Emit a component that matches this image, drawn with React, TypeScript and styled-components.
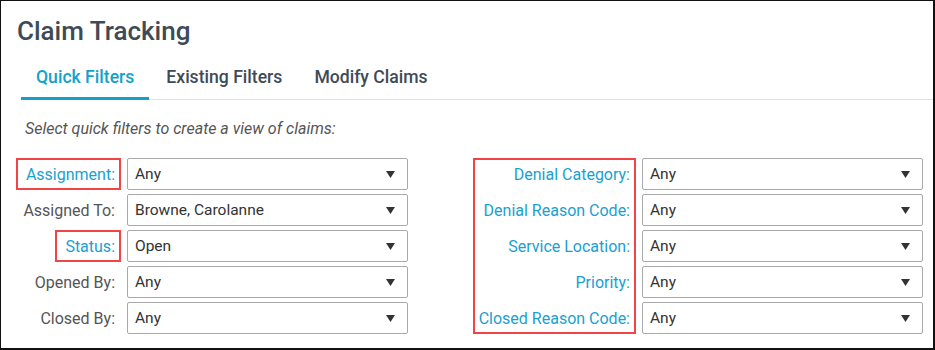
import React from 'react';
import styled, { createGlobalStyle } from 'styled-components';

const GlobalStyle = createGlobalStyle`
  * { box-sizing: border-box; }
  html, body { margin: 0; padding: 0; background: #ffffff; }
  body { font-family: Roboto, "Liberation Sans", Arial, sans-serif; }
`

const Frame = styled.div`
  width: 935px;
  height: 350px;
  border-style: solid;
  border-color: #111;
  border-width: 1px 2px 2px 1px;
  background: #fff;
  padding: 0 0 0 16px;
  overflow: hidden;
`

const Title = styled.h1`
  margin: 0;
  padding-top: 14px;
  height: 54px;
  font-size: 26px;
  line-height: 32px;
  font-weight: 500;
  color: #3e4b56;
`

const TabBar = styled.div`
  display: flex;
  margin-left: 4px;
  border-bottom: 1px solid #e3e3e3;
  height: 45px;
`

const Tab = styled.div<{ $active?: boolean }>`
  padding: 12px 15px 0;
  margin-right: 2px;
  font-size: 17.6px;
  font-weight: 500;
  color: ${p => (p.$active ? '#10a2cc' : '#3e4b56')};
  border-bottom: 3px solid ${p => (p.$active ? '#10a2cc' : 'transparent')};
  margin-bottom: -1px;
`

const Hint = styled.p`
  margin: 0;
  padding: 19px 0 0 8px;
  height: 58px;
  font-size: 16px;
  font-style: italic;
  color: #555;
`

const Columns = styled.div`
  display: flex;
  gap: 65px;
`

const Group = styled.div`
  display: flex;
  gap: 6px;
`

const LabelCol = styled.div<{ $width: number; $boxed?: boolean }>`
  display: flex;
  flex-direction: column;
  gap: 4px;
  width: ${p => p.$width}px;
  box-shadow: ${p => (p.$boxed ? 'inset 0 0 0 2px #f24447' : 'none')};
`

const Label = styled.div<{ $blue?: boolean; $boxed?: boolean }>`
  display: flex;
  align-items: center;
  justify-content: flex-end;
  align-self: flex-end;
  height: 32px;
  padding: 0 6px 0 10px;
  font-size: 16px;
  color: ${p => (p.$blue ? '#1a9fd1' : '#555')};
  box-shadow: ${p => (p.$boxed ? 'inset 0 0 0 2px #f24447' : 'none')};
  white-space: nowrap;
`

const SelectCol = styled.div`
  display: flex;
  flex-direction: column;
  gap: 4px;
`

const Select = styled.div`
  display: flex;
  align-items: center;
  justify-content: space-between;
  width: 281px;
  height: 32px;
  padding: 0 12px 0 7px;
  border: 1px solid #a9a9a9;
  border-radius: 2px;
  font-size: 15.5px;
  color: #333;
`

const Caret = () => (
  <svg width="9" height="7" viewBox="0 0 9 7">
    <path d="M0 0 H9 L4.5 7 Z" fill="#333" />
  </svg>
)

type Filter = { label: string; value: string; blue?: boolean; boxed?: boolean };

const leftFilters: Filter[] = [
  { label: 'Assignment:', value: 'Any', blue: true, boxed: true },
  { label: 'Assigned To:', value: 'Browne, Carolanne' },
  { label: 'Status:', value: 'Open', blue: true, boxed: true },
  { label: 'Opened By:', value: 'Any' },
  { label: 'Closed By:', value: 'Any' },
];

const rightFilters: Filter[] = [
  { label: 'Denial Category:', value: 'Any', blue: true },
  { label: 'Denial Reason Code:', value: 'Any', blue: true },
  { label: 'Service Location:', value: 'Any', blue: true },
  { label: 'Priority:', value: 'Any', blue: true },
  { label: 'Closed Reason Code:', value: 'Any', blue: true },
];

const App = (): JSX.Element => {
  return (
    <>
      <GlobalStyle />
      <Frame>
        <Title>Claim Tracking</Title>
        <TabBar>
          <Tab $active>Quick Filters</Tab>
          <Tab>Existing Filters</Tab>
          <Tab>Modify Claims</Tab>
        </TabBar>
        <Hint>Select quick filters to create a view of claims:</Hint>
        <Columns>
          <Group>
            <LabelCol $width={104}>
              {leftFilters.map(f => (
                <Label key={f.label} $blue={f.blue} $boxed={f.boxed}>{f.label}</Label>
              ))}
            </LabelCol>
            <SelectCol>
              {leftFilters.map(f => (
                <Select key={f.label}>{f.value}<Caret /></Select>
              ))}
            </SelectCol>
          </Group>
          <Group>
            <LabelCol $width={163} $boxed>
              {rightFilters.map(f => (
                <Label key={f.label} $blue={f.blue}>{f.label}</Label>
              ))}
            </LabelCol>
            <SelectCol>
              {rightFilters.map(f => (
                <Select key={f.label}>{f.value}<Caret /></Select>
              ))}
            </SelectCol>
          </Group>
        </Columns>
      </Frame>
    </>
  )
}

export default App;
